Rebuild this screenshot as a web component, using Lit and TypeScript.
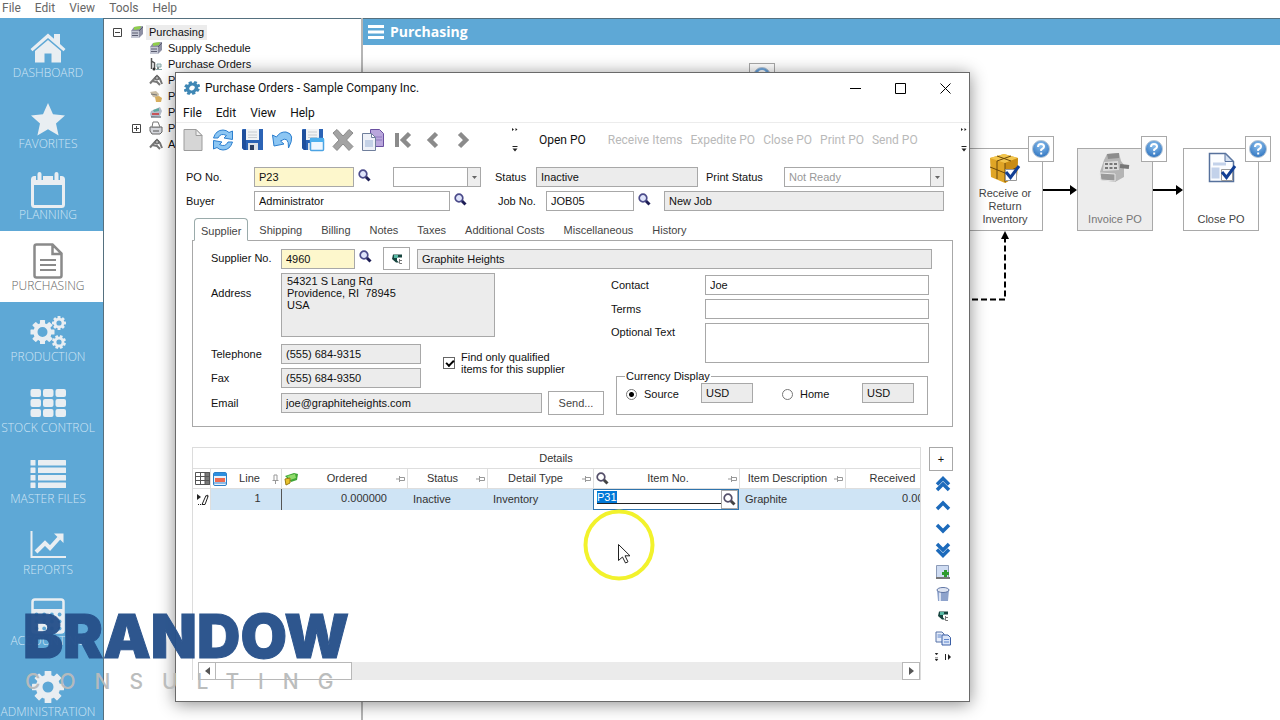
import { LitElement, html, css, svg, nothing, TemplateResult } from "lit";
import { customElement, query, state } from "lit/decorators.js";
import { classMap } from "lit/directives/class-map.js";

const draw = (w: number, h: number, body: unknown, box = `0 0 ${w} ${h}`) =>
  html`<svg width=${w} height=${h} viewBox=${box} aria-hidden="true">${body}</svg>`;

/* gear outline: teeth around a centre, with a round hole */
const gear = (cx: number, cy: number, r: number, hole: number, turn = 0) => {
  const teeth = [0, 45, 90, 135, 180, 225, 270, 315].map(
    (a) => svg`<rect x=${cx - r * 0.21} y=${cy - r} width=${r * 0.42} height=${r * 0.5} rx="0.6"
      transform="rotate(${a + turn} ${cx} ${cy})"/>`
  );
  const mid = (hole + r * 0.76) / 2;
  return svg`<g fill="currentColor">${teeth}</g>
    <circle cx=${cx} cy=${cy} r=${mid} fill="none" stroke="currentColor" stroke-width=${r * 0.76 - hole}/>`;
};

const navIcons: Record<string, unknown> = {
  home: svg`<path fill="currentColor" d="M18 3.5 0.5 19l2 2.3L18 8l15.500 13.300 2-2.300-5.500-5V4h-6v4.800z"/><path fill="currentColor" d="M5 21 18 10l13 11v11.500H21.500V23.500h-7v9H5z"/>`,
  star: svg`<path fill="currentColor" d="m18 2 5 11.300 12 1.200-9 8 2.600 12L18 28.200 7.400 34.500 10 22.500l-9-8 12-1.200z"/>`,
  calendar: svg`<rect x="2.500" y="5.500" width="31" height="29" rx="2" fill="none" stroke="currentColor" stroke-width="3"/><path fill="currentColor" d="M2 5h32v8H2z"/><path d="M9.500 0v8M26.500 0v8" stroke="#5ea8d6" stroke-width="7"/><path d="M9.500 2v7M26.500 2v7" stroke="currentColor" stroke-width="4" stroke-linecap="round"/>`,
  doc: svg`<path d="M5.500 1.500h16l9 9v22q0 2-2 2h-23q-2 0-2-2v-29q0-2 2-2zM21.500 1.500v9.500h9" fill="none" stroke="currentColor" stroke-width="2.500" transform="translate(1 0)"/><path d="M10 17h16M10 22h16M10 27h16" stroke="currentColor" stroke-width="2"/>`,
  gears: svg`${gear(12.5, 18, 12, 5)}${gear(29, 9, 7, 2.600)}${gear(29, 28, 7, 2.600, 22)}`,
  grid: svg`<g fill="currentColor">${[0, 1, 2].map((r) =>
    [0, 1, 2].map((c) => svg`<rect x=${0.5 + c * 12.500} y=${4 + r * 10} width="10.500" height="8" rx="2"/>`)
  )}</g>`,
  list: svg`<g fill="currentColor">${[0, 1, 2, 3].map(
    (r) => svg`<rect x="0.500" y=${4 + r * 7.500} width="5" height="5.500" rx="0.500"/><rect x="8" y=${4 + r * 7.500} width="28" height="5.500" rx="0.500"/>`
  )}</g>`,
  chart: svg`<path d="M1.500 4v26H36" fill="none" stroke="currentColor" stroke-width="2"/><path d="m6 25 9-9 5 5 9-10" fill="none" stroke="currentColor" stroke-width="4"/><path fill="currentColor" d="M24 6.500h9.500V16z"/>`,
  calc: svg`<rect x="2.500" y="1.500" width="31" height="33" rx="2.500" fill="none" stroke="currentColor" stroke-width="2.500"/><path fill="currentColor" d="M2 11h32v24H2z"/><g fill="#5ea8d6">${[0, 1, 2].map((r) =>
    [0, 1, 2, 3].map((c) => svg`<circle cx=${6.500 + c * 7.700} cy=${16.500 + r * 7} r="1.900"/>`)
  )}</g>`,
  cog: svg`${gear(18, 18, 16, 5.500)}`,
};

const nav = [
  ["home", "DASHBOARD"],
  ["star", "FAVORITES"],
  ["calendar", "PLANNING"],
  ["doc", "PURCHASING"],
  ["gears", "PRODUCTION"],
  ["grid", "STOCK CONTROL"],
  ["list", "MASTER FILES"],
  ["chart", "REPORTS"],
  ["calc", "ACCOUNTING"],
  ["cog", "ADMINISTRATION"],
];

const treeIcons: Record<string, unknown> = {
  cube: svg`<path d="M1 6 4 2l9-1v8l-4 4H1z" fill="#8d8fa3"/><path d="M1 6h8v7H1z" fill="#c4c7d4"/><path d="m4 2 7-1-1 3-6 1z" fill="#8fcf4a"/><path d="M2 8h6M2 10.500h6M9 6l4-4" fill="none" stroke="#5b5d70"/>`,
  dolly: svg`<path d="M2.500 1v11M2.500 4l3 2v6M9 8v4" fill="none" stroke="#555" stroke-width="1.500"/><circle cx="5" cy="12" r="1.500" fill="#333"/><path d="M8 7h4v3H8zM7 12.500h6" fill="#d9dfe2" stroke="#8aa"/>`,
  parts: svg`<path d="M1 10.500 5 6l3-3 3 3 2 5M3 8l5 1 3 3" fill="none" stroke="#777" stroke-width="2"/><circle cx="8" cy="5" r="2" fill="#aaa" stroke="#555"/>`,
  box: svg`<path d="m1 3 6-1 3 3-1 4-5-1z" fill="#c9bda6"/><path d="m6 8 4-1 3 2-1 4H7z" fill="#d9b060"/><path d="m2 5 6 1" stroke="#777"/>`,
  register: svg`<path d="m2 6 9-4 2 4-2 5-9 1-1-3z" fill="#b3bccb"/><path d="m4 5 6-2v3l-5 1z" fill="#5fa9a0"/><path d="M3 9h7" stroke="#c33" stroke-width="1.500"/><path d="M2 12h10" stroke="#345"/>`,
  printer: svg`<path d="M1 6h12v5l-2 2H3l-2-3z" fill="#d5d7dc" stroke="#666"/><path d="m3 6 1-5h5l2 5z" fill="#fff" stroke="#777"/><path d="M4 10h6" stroke="#555"/>`,
};

const tree = [
  ["cube", "Supply Schedule"],
  ["dolly", "Purchase Orders"],
  ["parts", "P"],
  ["box", "P"],
  ["register", "P"],
  ["printer", "P"],
  ["parts", "A"],
];

const floppy = svg`<path d="M1 2q0-1 1-1h20v21H3l-2-2z" fill="#2b63b5"/><path d="M1 2h4v20H3l-2-2z" fill="#1f4f9c"/><path d="M5 1h13v11H5z" fill="#f1f3f5"/><path d="M7 4h9M7 7h9M7 9.500h9" stroke="#c8ccd0"/><path d="M7 15h10v7H7z" fill="#dde1e6"/><path d="M9 17h4v5H9z" fill="#2c3e60"/>`;

const toolIcons: Record<string, unknown> = {
  New: svg`<path d="M3 1.500h12l6 6v15H3z" fill="#d6d6d6" stroke="#9c9c9c"/><path d="M15 1.500v6h6z" fill="#efefef" stroke="#9c9c9c"/>`,
  Refresh: svg`<path d="M2.500 10Q5 2 12 2q3.500 0 6 2.500L21.500 3v8.500L13 10l2.500-2.500Q9.500 4.500 7 10z" fill="#8cc6f3" stroke="#2c7fcf"/><path d="M21.500 14q-2.500 8-9.500 8-3.500 0-6-2.500L2.500 21v-8.500L11 14l-2.500 2.500q6 3 8.500-2.500z" fill="#8cc6f3" stroke="#2c7fcf"/>`,
  Save: floppy,
  Undo: svg`<path d="M1.500 7 3 18l10-2-3.500-3Q18 7 17.500 20 25 6 15 4 9 3.500 5.500 9z" fill="#8cc6f3" stroke="#2c7fcf"/>`,
  "Save and New": svg`${floppy}<rect x="9.500" y="10.500" width="13" height="12" rx="1" fill="#eef7ff" stroke="#4ba3e3" stroke-width="1.500"/><path d="M9 10h14v4H9z" fill="#4db0ee"/>`,
  Delete: svg`<path d="M2 5 6 1.500 12 8l6-6.500L22 5l-6.500 7 6.500 6.500-4 4L12 16l-6 6.500-4-4L8 12z" fill="#a3a3a3" stroke="#8a8a8a"/>`,
  Copy: svg`<path d="M9.500 1.500h9l4 4v13h-13z" fill="#b9a6dc" stroke="#6a50a0"/><path d="M12 9h9M12 12h9" stroke="#8f78c0"/><path d="M1.500 5.500h9l4 4v13h-13z" fill="#eef1f8" stroke="#707f9c"/><path d="M10.500 5.500v4h4z" fill="#fff" stroke="#707f9c"/><path d="M4 12h8v7H4z" fill="#c4d1e6"/>`,
  First: svg`<path d="M4 5h4v14H4z" fill="#8b8b8b"/><path d="m18.500 5.500-6.500 6.500 6.500 6.500" fill="none" stroke="#8b8b8b" stroke-width="4.500"/>`,
  Previous: svg`<path d="M15.500 5.500 9 12l6.500 6.500" fill="none" stroke="#8b8b8b" stroke-width="4.500"/>`,
  Next: svg`<path d="M8.500 5.500 15 12l-6.500 6.500" fill="none" stroke="#8b8b8b" stroke-width="4.500"/>`,
};

const overflowMark = draw(
  6,
  24,
  svg`<path d="M0 0 2 1.500 0 3zM3.500 0l2 1.500-2 1.500z" fill="#222"/><path d="M0.500 18.500h5" stroke="#222"/><path d="M0.500 20.500h5L3 23.500z" fill="#222"/>`
);

const lens = (grey = false) =>
  draw(
    13,
    13,
    svg`<path d="m7.500 7.500 4 4" stroke=${grey ? "#444" : "#1d1d55"} stroke-width="3"/><circle cx="5" cy="5" r="3.800" fill=${grey ? "#fff" : "#dfe4fb"} stroke=${grey ? "#55506a" : "#4b4b8a"} stroke-width="1.700"/>`
  );

const pin = draw(9, 8, svg`<path d="M0 4h3M3.500 1v6M3.500 2.500h5v3h-5" fill="none" stroke="#999"/>`);
const pinDown = draw(7, 10, svg`<path d="M3.500 10V7M0.500 6.500h6M2 6.500V1h3v5.500" fill="none" stroke="#999"/>`);

const drill = draw(
  12,
  12,
  svg`<path d="M2 1.500h9v3H6v3l2 2H5L1 6z" fill="#17453f"/><path d="M3 2h4v3H3z" fill="#57b9a4"/><path d="M8.500 6v4.500H11M8.500 7.500H11" fill="none" stroke="#777"/>`
);

const chevrons = (dirs: number[]) =>
  draw(
    16,
    16,
    dirs.map((y) => svg`<path d=${y > 0 ? `M2 ${y + 6} 8 ${y}l6 6` : `M2 ${-y}l6 6 6-6`} fill="none" stroke="#1c6abb" stroke-width="3.500"/>`)
  );

const sideTools: [string, TemplateResult][] = [
  ["Move to top", chevrons([2.5, 8])],
  ["Move up", chevrons([5])],
  ["Move down", chevrons([-5])],
  ["Move to bottom", chevrons([-2, -7.5])],
  ["Insert line", draw(16, 16, svg`<path d="M1.500 1.500h12v13h-12z" fill="#cfdcf2" stroke="#8c9bb8"/><path d="M1 14h14" stroke="#777" stroke-width="2"/><path d="M10.500 6v7M7 9.500h7" stroke="#2e9a2e" stroke-width="3"/>`)],
  ["Delete line", draw(16, 16, svg`<path d="M2 4h12l-1 11H3z" fill="#8ea3cc"/><path d="M5 5v10" stroke="#d7e0f2" stroke-width="2"/><ellipse cx="8" cy="4" rx="6" ry="2.500" fill="#dfe5f2" stroke="#6076a5"/>`)],
  ["Details", drill],
  ["Copy line", draw(16, 16, svg`<path d="M1 2h6l2 2v8H1z" fill="#e8eefa" stroke="#5672a8"/><path d="M7 5h6l2.500 2.500V15H7z" fill="#dbe6f9" stroke="#3b5fa5"/><path d="M2.500 5h4M2.500 7h4M9 9.500h5M9 12h5" stroke="#5f86cc"/>`)],
];

const helpIcon = draw(
  18,
  18,
  svg`<defs><radialGradient id="g" cx=".5" cy=".3" r=".7"><stop offset="0" stop-color="#8cc0ee"/><stop offset="1" stop-color="#2f74c0"/></radialGradient></defs><circle cx="9" cy="9" r="8.500" fill="url(#g)" stroke="#b9c7d6"/><path d="M6 7q0-3 3-3t3 2.600Q12 8.300 9.200 9.600V11M9.200 12.500v2" fill="none" stroke="#fff" stroke-width="2"/>`
);

const tick = svg`<path d="M16.500 17.500h11v11h-11z" fill="#fff" stroke="#999"/><path d="m17 20 4.500 5.500L30 14" fill="none" stroke="#123f94" stroke-width="3"/>`;

const nodeIcons: Record<string, unknown> = {
  box: svg`<path d="m1 6 14-4 14 4-1 18-12 7L2 25z" fill="#e0a526"/><path d="m1 6 14-4 14 4-13 5z" fill="#f2c54d"/><path d="M16 11v20l12-7 1-18z" fill="#c98c14"/><path d="M16 11v19M8 4l14 5M22 4 8 9v18M1 15l15 6 13-6" fill="none" stroke="#6b480a"/>${tick}`,
  register: svg`<path d="m8 2 12-1 2 8 3 4v12l-9 5-14-2-1-8 4-12z" fill="#b5b5b5"/><path d="m8 2 12-1v5L9 7z" fill="#8d8d8d"/><path d="m5 10 14-1 1 9-16 1z" fill="#dcdcdc"/><path d="M6 12h12M6 16h12" stroke="#777" stroke-width="2" stroke-dasharray="3 1.500"/><path d="m1 21 15 1v7l-14-1z" fill="#999" stroke="#e6e6e6"/><path d="m21 14 9 1" stroke="#777" stroke-width="4"/>`,
  doc: svg`<path d="M4.500 1.500h16l8 8v20h-24z" fill="#fbfdff" stroke="#56719c" stroke-width="1.500"/><path d="M20 1.500v8h8z" fill="#d5e1f2" stroke="#56719c"/><path d="M8 12h13M8 17h5v8H8z" fill="#c3d2ea" stroke="#c3d2ea" stroke-width="3"/>${tick}`,
};

@customElement("app-root")
export class AppRoot extends LitElement {
  @state() private tab = "Supplier";
  @query(".cell-input") private cellInput!: HTMLInputElement;

  firstUpdated() {
    this.cellInput.focus();
    this.cellInput.select();
  }

  static styles = css`
    :host {
      display: flex;
      flex-direction: column;
      position: relative;
      height: 100vh;
      overflow: hidden;
      background: #fff;
      color: #222;
      font: 11px/13px "Liberation Sans", Arial, sans-serif;
    }
    * { box-sizing: border-box; }
    svg { display: block; flex: none; }
    button, input, select, textarea { font: inherit; color: inherit; margin: 0; border-radius: 0; outline: none; }
    button { border: 0; padding: 0; background: none; }
    .ui { font: 12px/16px Roboto, "Open Sans", sans-serif; }
    .menu { display: flex; gap: 14px; }
    .app-menu { height: 18px; padding-left: 2px; color: #666; }
    .body { flex: 1; display: flex; min-height: 0; }

    .nav { width: 104px; flex: none; overflow: hidden; background: #5ea8d6; border-right: 1px solid #55707f; }
    .nav-item { display: flex; flex-direction: column; align-items: center; width: 100%; height: 71px; padding: 12px 7px 0 0; color: #e9eef2; text-decoration: none; }
    .nav-label { font: 12px/14px "Open Sans", "Noto Sans", sans-serif; font-weight: 300; color: #cfe5f5; white-space: nowrap; }
    .nav-item.current { background: #fff; color: #8a8a8a; }
    .nav-item.current .nav-label { color: #666; }

    .tree { width: 257px; flex: none; margin: 0; padding: 5px 0 0 9px; list-style: none; border-top: 1px solid #55707f; overflow: hidden; }
    .tree-row { display: flex; align-items: center; height: 16px; }
    .tree-toggle { width: 17px; }
    .tree-children { margin: 0; padding: 0 0 0 19px; list-style: none; }
    .tree-label { margin-left: 2px; padding: 0 3px; color: #111; white-space: nowrap; line-height: 15px; }
    .tree-label.selected { background: #ececec; }

    .main { flex: 1; min-width: 0; display: flex; flex-direction: column; border-left: 2px solid #b5b5b5; }
    .main-head { display: flex; align-items: center; gap: 6px; height: 27px; padding-left: 5px; background: #5ea8d6; border-top: 1px solid #55707f; color: #fff; }
    .main-title { margin: 0; font: 700 14px/20px "Open Sans", "Noto Sans", sans-serif; }
    .canvas { position: relative; flex: 1; }
    .links { position: absolute; inset: 0; }
    .node { position: absolute; top: 103px; width: 76px; height: 83px; display: flex; flex-direction: column; align-items: center; justify-content: space-between; padding: 3px 2px 4px; border: 1px solid #a9a9a9; background: #fff; color: #444; text-align: center; text-decoration: none; }
    .node.off { background: #ededed; color: #777; }
    .help { position: absolute; display: grid; place-items: center; width: 26px; height: 26px; border: 1px solid #a9a9a9; background: #fff; }
    .n1 { left: 604px; } .n2 { left: 714px; } .n3 { left: 820px; }
    .h0 { left: 386px; top: 18px; } .h1 { left: 665px; top: 91px; } .h2 { left: 778px; top: 91px; } .h3 { left: 882px; top: 91px; }

    .window { position: absolute; left: 175px; top: 72px; width: 795px; height: 630px; display: flex; flex-direction: column; background: #fff; border: 1px solid #6a6a6a; box-shadow: 0 2px 16px rgba(0, 0, 0, 0.45); color: #111; }
    .title-bar { display: flex; align-items: center; height: 30px; padding: 0 1px 0 8px; gap: 5px; }
    .title { flex: 1; margin: 0; font-weight: 400; }
    .win-buttons { display: flex; }
    .win-buttons button { width: 45px; height: 28px; display: grid; place-items: center; }
    .win-menu { height: 20px; padding: 2px 0 0 7px; border-bottom: 1px solid #ececec; }
    .tools { display: flex; align-items: center; height: 33px; padding-left: 2px; }
    .tools button { display: grid; place-items: center; width: 30px; height: 26px; }
    .overflow { width: 30px; padding-left: 18px; }
    .overflow.after { margin-left: 16px; }
    .actions { display: flex; align-items: center; flex: 1; gap: 8px; padding-left: 15px; }
    .actions .go { width: auto; }
    .actions .go:disabled { color: #b9b9b9; }
    .actions .go.first { margin-right: 14px; }
    .tools .last { width: 8px; padding: 0; }

    .form { display: flex; flex-direction: column; gap: 4px; padding: 11px 25px 0 10px; }
    .line { display: flex; align-items: center; }
    .line > label, .lab { color: #111; white-space: nowrap; }
    .fld { height: 20px; min-width: 0; padding: 0 4px; border: 1px solid #a8a8a8; background: #fff; }
    .fld.ro { background: #ececec; }
    .fld.key { background: #fdf7cc; }
    .find { width: 20px; height: 20px; padding: 0 0 4px; display: grid; place-items: center; }
    .l-main { width: 68px; } .w100 { width: 100px; } .w196 { width: 196px; } .w88 { width: 88px; }
    .l-status { width: 55px; padding-left: 14px; } .w162 { width: 162px; }
    .l-print { width: 86px; padding-left: 8px; }
    .l-job { width: 76px; padding-left: 28px; }
    .grow { flex: 1; }
    .push { margin-left: 19px; }
    .job-name { margin-left: 10px; }
    .combo { position: relative; display: flex; height: 20px; border: 1px solid #a8a8a8; background: #fff; }
    .combo select { flex: 1; min-width: 0; appearance: none; border: 0; background: none; padding: 0 4px; color: #999; opacity: 1; }
    .combo .arrow { position: absolute; inset: 0 0 0 auto; width: 13px; display: grid; place-items: center; background: #eee; border-left: 1px solid #a8a8a8; pointer-events: none; }

    .tabs { display: flex; height: 22px; margin: 7px 0 0 18px; }
    .tab { padding: 3px 8px 0 9px; color: #444; border: 1px solid transparent; }
    .tab.on { position: relative; margin-right: 1px; padding: 3px 6px 0; height: 23px; border: 1px solid #9aabab; border-bottom-color: #fff; border-radius: 4px 4px 0 0; background: #fff; }
    .tab-panel { margin: 0 16px; padding: 6px 20px 11px 18px; border: 1px solid #a8a8a8; }
    .l-sup { width: 70px; } .w74 { width: 74px; }
    .drill { width: 27px; height: 23px; margin: 0 7px 0 8px; border: 1px solid #a8a8a8; display: grid; place-items: center; }
    .cols { display: flex; gap: 7px; margin-top: 3px; }
    .left { display: flex; flex-direction: column; gap: 3px; }
    .line.top { align-items: flex-start; }
    .line.top .l-sup { padding-top: 14px; }
    .line.top .l-right { padding-top: 3px; }
    .address { width: 214px; height: 64px; padding: 1px 5px; resize: none; line-height: 12px; border: 1px solid #a8a8a8; background: #ececec; }
    .phones { display: flex; align-items: center; margin-top: 4px; }
    .phone-rows { display: flex; flex-direction: column; gap: 4px; }
    .w140 { width: 140px; } .w261 { width: 261px; }
    .check { display: flex; align-items: center; gap: 6px; margin: 0 0 6px 22px; line-height: 12px; }
    .check input { appearance: none; display: grid; width: 12px; height: 12px; border: 1px solid #666; background: #fff; flex: none; }
    .check input:checked::before { content: ""; width: 6px; height: 3px; margin: 2px 0 0 2px; border: solid #000; border-width: 0 0 2px 2px; transform: rotate(-45deg); }
    .send { width: 56px; height: 24px; margin-left: 6px; border: 1px solid #a8a8a8; color: #444; }
    .right { flex: 1; min-width: 0; display: flex; flex-direction: column; gap: 4px; padding: 2px 3px 0 0; }
    .l-right { width: 94px; }
    .opt { height: 40px; resize: none; line-height: 13px; border: 1px solid #a8a8a8; padding: 2px 4px; }
    .currency { display: flex; align-items: center; height: 45px; margin: 3px 1px 0 5px; padding: 0 13px 0 9px; border: 1px solid #a8a8a8; min-width: 0; }
    .currency legend { padding: 0 1px; margin: 0 0 0 -1px; color: #111; }
    .currency .fld { width: 52px; }
    .radio { display: flex; align-items: center; gap: 7px; padding-top: 2px; }
    .radio input { appearance: none; width: 11px; height: 11px; border: 1px solid #777; border-radius: 50%; background: #fff; }
    .radio input:checked { background: radial-gradient(circle, #000 2px, #fff 3px); }
    .r-source { width: 75px; } .r-home { width: 80px; margin-left: 29px; }

    .details { flex: 1; display: flex; gap: 8px; min-height: 0; padding: 20px 16px 21px; }
    .grid { flex: 1; min-width: 0; display: flex; flex-direction: column; justify-content: space-between; overflow: hidden; border: 1px solid #dcdcdc; border-bottom: 0; color: #333; }
    .grid-table { width: 775px; table-layout: fixed; border-collapse: collapse; }
    .grid-title { height: 20px; text-align: left; }
    .grid-title span { display: block; width: 726px; line-height: 20px; text-align: center; }
    th, td { padding: 0; font-weight: 400; }
    .grid-table th { height: 20px; border: solid #dedede; border-width: 1px 1px 1px 0; }
    .head { display: flex; align-items: center; padding: 0 2px; }
    .head span { flex: 1; text-align: center; white-space: nowrap; }
    .head.start span { text-align: left; padding-left: 22px; }
    .c-mark { width: 17px; } .c-line { width: 71px; } .c-ord { width: 126px; } .c-stat { width: 80px; } .c-type { width: 106px; } .c-item { width: 146px; } .c-desc { width: 106px; } .c-rec { width: 123px; }
    .data td { height: 21px; background: #cfe4f5; }
    .data .mark { background: #fff; border-right: 1px solid #dedede; }
    .mark svg { margin-left: 3px; }
    .data .num { text-align: right; padding: 0 20px 3px 0; }
    .data .line-no { border-right: 1px solid #555; }
    .txt { padding-left: 6px; }
    .cell-edit { display: flex; align-items: center; height: 21px; border: 1px solid #2f74ad; background: #fff; }
    .cell-input { flex: 1; min-width: 0; height: 13px; margin: 0 0 4px 3px; padding: 0; border: 0; border-bottom: 1px solid #222; background: #fff; }
    .cell-input::selection { background: #0078d7; color: #fff; }
    .cell-find { width: 17px; height: 19px; display: grid; place-items: center; border: 1px solid #a8a8a8; background: #fff; }
    .scroll { display: flex; height: 18px; margin-left: 5px; background: #ebebeb; }
    .scroll button { width: 18px; display: grid; place-items: center; border: 1px solid #b8b8b8; background: #fff; }
    .thumb { width: 136px; border: 1px solid #b8b8b8; border-left: 0; background: #fff; }
    .track { flex: 1; }
    .side { width: 24px; display: flex; flex-direction: column; align-items: center; }
    .side button { width: 20px; height: 22px; display: grid; place-items: center; margin-left: 4px; }
    .side .add { width: 24px; height: 24px; margin: 0 0 2px; border: 1px solid #a8a8a8; }
    .side .more { margin: 4px 0 0 4px; }

    .brand { position: absolute; left: 23px; top: 606px; color: #26508a; opacity: 0.96; pointer-events: none; }
    .brand-name { font: 900 60px/60px Inter, Lato, sans-serif; -webkit-text-stroke: 1px #26508a; }
    .brand-sub { margin: 5px 0 0 2px; font: 500 21px/22px Inter, Lato, sans-serif; letter-spacing: 19px; color: #b9bbbb; }
    .pointer { position: absolute; left: 583px; top: 509px; pointer-events: none; }
  `;

  private field(id: string, label: string, lab: string, cls: string, value: string, ro = false) {
    return html`<label class=${lab} for=${id}>${label}</label
      ><input id=${id} class="fld ${cls}" .value=${value} ?readonly=${ro} />`;
  }

  private find(label: string) {
    return html`<button class="find" aria-label=${label}>${lens()}</button>`;
  }

  private arrow = html`<span class="arrow">${draw(5, 3, svg`<path d="M0 0h5L2.500 3z" fill="#666"/>`)}</span>`;

  private head(label: string, icon: unknown = nothing, mark: unknown = pin) {
    return html`<th><div class="head">${icon}<span>${label}</span>${mark}</div></th>`;
  }

  render() {
    return html`
      <div class="menu ui app-menu">${["File", "Edit", "View", "Tools", "Help"].map((m) => html`<span>${m}</span>`)}</div>
      <div class="body">
        <nav class="nav">
          ${nav.map(
            ([icon, label]) => html`<a href="#" class=${classMap({ "nav-item": true, current: icon === "doc" })}>
              ${draw(36, 36, navIcons[icon])}<span class="nav-label">${label}</span></a>`
          )}
        </nav>
        <ul class="tree">
          <li>
            <div class="tree-row">
              <span class="tree-toggle">${draw(9, 9, svg`<path d="M.5.5h8v8h-8zM2 4.500h5" fill="none" stroke="#444"/>`)}</span>
              ${draw(14, 14, treeIcons.cube)}<span class="tree-label selected">Purchasing</span>
            </div>
            <ul class="tree-children">
              ${tree.map(
                ([icon, label]) => html`<li class="tree-row">
                  <span class="tree-toggle">${icon === "printer"
                    ? draw(9, 9, svg`<path d="M.5.5h8v8h-8zM2 4.500h5M4.500 2v5" fill="none" stroke="#444"/>`)
                    : nothing}</span>
                  ${draw(14, 14, treeIcons[icon])}<span class="tree-label">${label}</span>
                </li>`
              )}
            </ul>
          </li>
        </ul>
        <main class="main">
          <header class="main-head">
            ${draw(16, 16, svg`<path d="M0 2.500h16M0 8h16M0 13.500h16" stroke="#fff" stroke-width="3"/>`)}
            <h1 class="main-title">Purchasing</h1>
          </header>
          <div class="canvas">
            <svg class="links" width="917" height="300" viewBox="0 0 917 300" aria-hidden="true">
              <path d="M680 145h28M790 145h24" stroke="#000" stroke-width="2" />
              <path d="m707 140 7 5-7 5zM813 140l7 5-7 5zM642 186l4 8h-8z" fill="#000" />
              <path d="M600 254.500h42V194" fill="none" stroke="#000" stroke-width="2" stroke-dasharray="6 3" />
            </svg>
            <a class="node n1" href="#">${draw(32, 32, nodeIcons.box)}<span>Receive or Return Inventory</span></a>
            <a class="node n2 off" href="#">${draw(32, 32, nodeIcons.register)}<span>Invoice PO</span></a>
            <a class="node n3" href="#">${draw(32, 32, nodeIcons.doc)}<span>Close PO</span></a>
            ${["h0", "h1", "h2", "h3"].map((h) => html`<button class="help ${h}" aria-label="Help">${helpIcon}</button>`)}
          </div>
        </main>
      </div>

      <section class="window">
        <header class="title-bar">
          ${draw(16, 16, svg`<g color="#3f87b5" transform="translate(8 8) rotate(20) skewX(-12) translate(-8 -8)">${gear(8, 8, 7.500, 2.500)}</g>`)}
          <h2 class="title ui">Purchase Orders - Sample Company Inc.</h2>
          <div class="win-buttons">
            <button aria-label="Minimize">${draw(11, 11, svg`<path d="M0 5.500h11" stroke="#000"/>`)}</button>
            <button aria-label="Maximize">${draw(11, 11, svg`<path d="M.5.5h10v10H.5z" fill="none" stroke="#000"/>`)}</button>
            <button aria-label="Close">${draw(11, 11, svg`<path d="m.5.5 10 10M10.500.5l-10 10" stroke="#000"/>`)}</button>
          </div>
        </header>
        <div class="menu ui win-menu">${["File", "Edit", "View", "Help"].map((m) => html`<span>${m}</span>`)}</div>
        <div class="tools ui">
          ${Object.keys(toolIcons).map((t) => html`<button aria-label=${t}>${draw(24, 24, toolIcons[t])}</button>`)}
          <span class="overflow after">${overflowMark}</span>
          <div class="actions">
            <button class="go first">Open PO</button>
            ${["Receive Items", "Expedite PO", "Close PO", "Print PO", "Send PO"].map((a) => html`<button class="go" disabled>${a}</button>`)}
          </div>
          <span class="overflow last">${overflowMark}</span>
        </div>

        <div class="form">
          <div class="line">
            ${this.field("po", "PO No.", "l-main", "key w100", "P23")}${this.find("Find PO")}
            <span class="combo w88 push"><select aria-label="Revision"><option></option></select>${this.arrow}</span>
            ${this.field("status", "Status", "l-status", "ro w162", "Inactive", true)}
            <label class="l-print" for="print">Print Status</label>
            <span class="combo grow"><select id="print" disabled><option>Not Ready</option></select>${this.arrow}</span>
          </div>
          <div class="line">
            ${this.field("buyer", "Buyer", "l-main", "w196", "Administrator")}${this.find("Find buyer")}
            ${this.field("job", "Job No.", "l-job", "w88", "JOB05")}${this.find("Find job")}
            <input class="fld ro grow job-name" aria-label="Job name" .value=${"New Job"} readonly />
          </div>
        </div>

        <div class="tabs" role="tablist">
          ${["Supplier", "Shipping", "Billing", "Notes", "Taxes", "Additional Costs", "Miscellaneous", "History"].map(
            (t) => html`<button role="tab" class=${classMap({ tab: true, on: this.tab === t })} @click=${() => (this.tab = t)}>${t}</button>`
          )}
        </div>
        <div class="tab-panel">
          <div class="line">
            ${this.field("sup", "Supplier No.", "l-sup", "key w74", "4960")}${this.find("Find supplier")}
            <button class="drill" aria-label="Open supplier">${drill}</button>
            <input class="fld ro grow" aria-label="Supplier name" .value=${"Graphite Heights"} readonly />
          </div>
          <div class="cols">
            <div class="left">
              <div class="line top">
                <label class="l-sup" for="addr">Address</label>
                <textarea id="addr" class="address" readonly .value=${"54321 S Lang Rd\nProvidence, RI  78945\nUSA"}></textarea>
              </div>
              <div class="phones">
                <div class="phone-rows">
                  <div class="line">${this.field("tel", "Telephone", "l-sup", "ro w140", "(555) 684-9315", true)}</div>
                  <div class="line">${this.field("fax", "Fax", "l-sup", "ro w140", "(555) 684-9350", true)}</div>
                </div>
                <label class="check"><input type="checkbox" checked /><span>Find only qualified<br />items for this supplier</span></label>
              </div>
              <div class="line">
                ${this.field("email", "Email", "l-sup", "ro w261", "joe@graphiteheights.com", true)}
                <button class="send">Send...</button>
              </div>
            </div>
            <div class="right">
              <div class="line">${this.field("contact", "Contact", "l-right", "grow", "Joe")}</div>
              <div class="line">${this.field("terms", "Terms", "l-right", "grow", "")}</div>
              <div class="line top">
                <label class="l-right" for="opt">Optional Text</label><textarea id="opt" class="opt grow"></textarea>
              </div>
              <fieldset class="currency">
                <legend>Currency Display</legend>
                <label class="radio r-source"><input type="radio" name="cur" checked />Source</label>
                <input class="fld ro" aria-label="Source currency" .value=${"USD"} readonly />
                <label class="radio r-home"><input type="radio" name="cur" />Home</label>
                <input class="fld ro" aria-label="Home currency" .value=${"USD"} readonly />
              </fieldset>
            </div>
          </div>
        </div>

        <div class="details">
          <div class="grid">
            <table class="grid-table">
              <caption class="grid-title"><span>Details</span></caption>
              <colgroup>
                ${["mark", "line", "ord", "stat", "type", "item", "desc", "rec"].map((c) => html`<col class="c-${c}" />`)}
              </colgroup>
              <thead>
                <tr>
                  <th><div class="head">${draw(15, 13, svg`<path d="M10 0h5v13h-5z" fill="#777"/><path d="M.5.5h14v12H.5zM.5 4.500h14M.5 8.500h14M5.500 0v13M10 0v13" fill="none" stroke="#555"/>`)}</div></th>
                  ${this.head("Line", draw(15, 14, svg`<rect x=".5" y=".5" width="13" height="13" rx="1.500" fill="#e8f2fb" stroke="#2d7fc6"/><path d="M1 1h12v3H1z" fill="#2d8fe0"/><path d="M2 6h10v4H2z" fill="#ee6a50"/><path d="M1 11h12" stroke="#8dbbe6" stroke-width="2"/>`), pinDown)}
                  ${this.head("Ordered", draw(15, 14, svg`<path d="m1 4 9-3 4 1-1 6-6 2z" fill="#3fa535"/><path d="m3 4 8-2 1 4-6 2z" fill="#8fdc6a"/><path d="m1 7 5-1v5l-4 2z" fill="#e8c22e" stroke="#9a7a10"/>`))}
                  ${this.head("Status")} ${this.head("Detail Type")} ${this.head("Item No.", lens(true))} ${this.head("Item Description")}
                  <th><div class="head start"><span>Received</span></div></th>
                </tr>
              </thead>
              <tbody>
                <tr class="data">
                  <td class="mark">${draw(13, 13, svg`<path d="m1 1 4 3-4 3z" fill="#222"/><path d="M2 11.500h1M4 11.500h1M6 11.500l4-9 2 1-3 8zM11 2l1.500 1" fill="none" stroke="#222"/>`)}</td>
                  <td class="num line-no">1</td>
                  <td class="num">0.000000</td>
                  <td class="txt">Inactive</td>
                  <td class="txt">Inventory</td>
                  <td><div class="cell-edit">
                    <input class="cell-input" aria-label="Item No." .value=${"P31"} />
                    <button class="cell-find" aria-label="Find item">${lens(true)}</button>
                  </div></td>
                  <td class="txt">Graphite</td>
                  <td class="num">0.000000</td>
                </tr>
              </tbody>
            </table>
            <div class="scroll">
              <button aria-label="Scroll left">${draw(5, 8, svg`<path d="M5 0v8L0 4z" fill="#555"/>`)}</button>
              <div class="thumb"></div>
              <div class="track"></div>
              <button aria-label="Scroll right">${draw(5, 8, svg`<path d="M0 0v8l5-4z" fill="#555"/>`)}</button>
            </div>
          </div>
          <div class="side">
            <button class="add" aria-label="Add line">+</button>
            ${sideTools.map(([label, icon]) => html`<button aria-label=${label}>${icon}</button>`)}
            <span class="more">${draw(16, 8, svg`<path d="M0 0h3L1.500 2zM0 4.500h3M0 6h3L1.500 8z" fill="#222" stroke="#222" stroke-width=".4"/><path d="M10.500 1v6" stroke="#222"/><path d="m13 1 3 3-3 3z" fill="#222"/>`)}</span>
          </div>
        </div>
      </section>

      <div class="brand">
        <div class="brand-name">BRANDOW</div>
        <div class="brand-sub">CONSULTING</div>
      </div>
      <div class="pointer">
        ${draw(72, 72, svg`<circle cx="36" cy="36" r="33.500" fill="none" stroke="#f2f22c" stroke-width="4"/><path d="M35.500 35.500v16l4-3.500 3 6 2.500-1.200-3-6h5z" fill="#fff" stroke="#222"/>`)}
      </div>
    `;
  }
}
